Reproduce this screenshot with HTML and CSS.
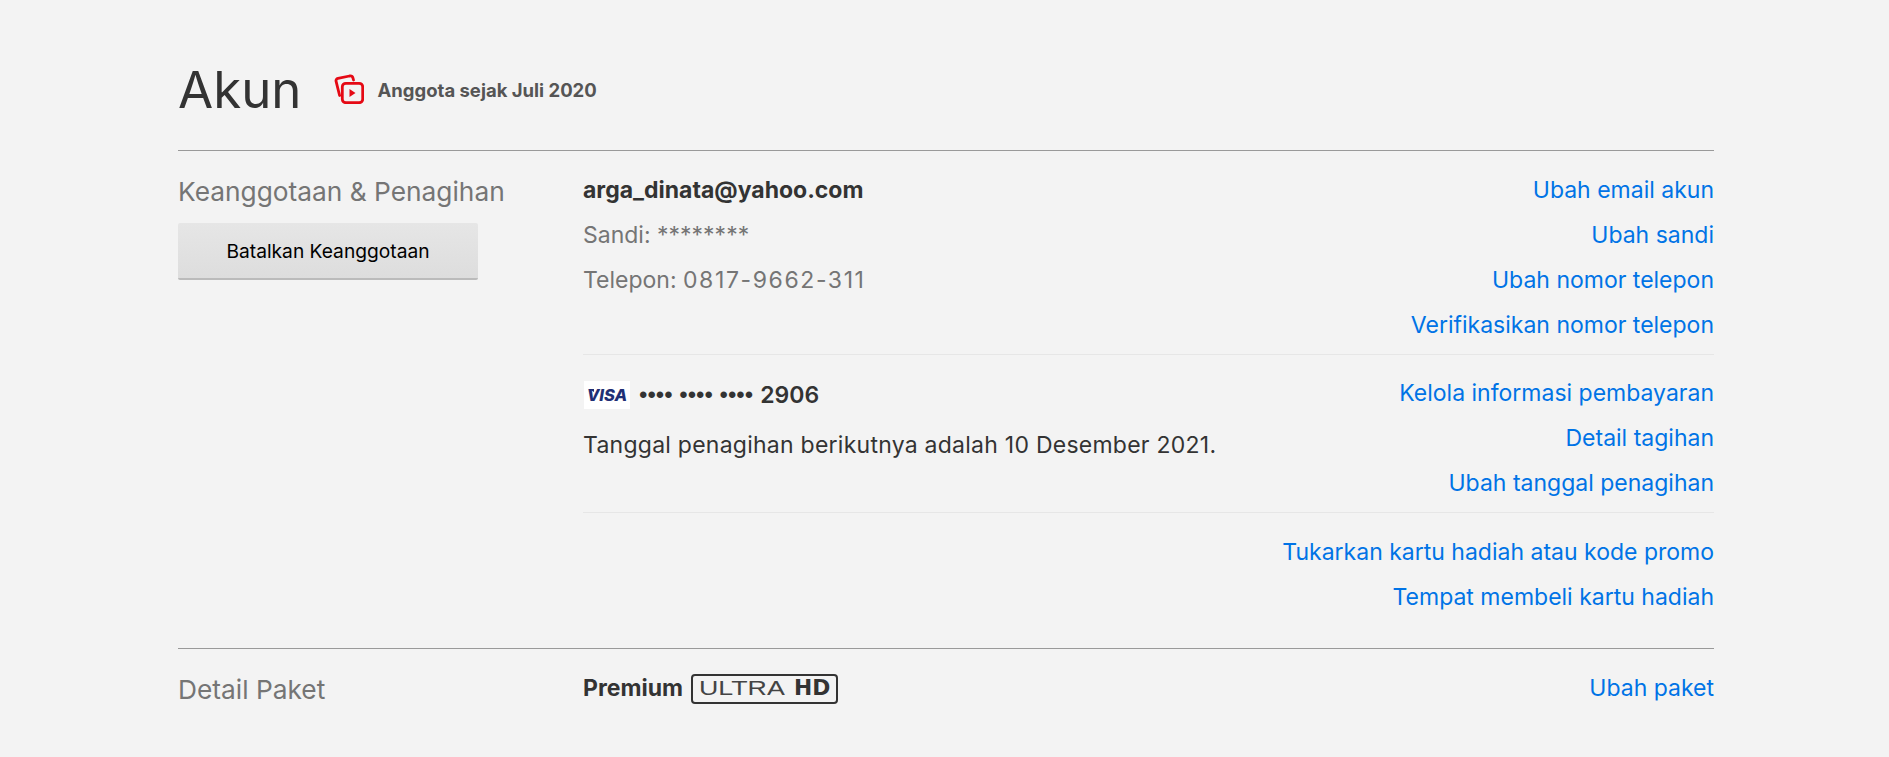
FILE: index.html
```html
<!DOCTYPE html>
<html lang="id">
<head>
<meta charset="utf-8">
<title>Akun</title>
<link rel="stylesheet" href="styles.css">
</head>
<body>
<main class="account">
  <header class="head">
    <h1 class="title">Akun</h1>
    <div class="since">
      <svg class="since-icon" viewBox="0 0 30 30" width="30" height="30">
        <path d="M5.600 21.500 2.100 7.400 C1.700 5.800 2.500 4.700 4 4.400 L15.500 2 C17.200 1.700 18.500 2.300 19 4.200 L19.500 6" fill="none" stroke="#e50914" stroke-width="2.800" stroke-linecap="round"/>
        <rect x="8.300" y="9.300" width="20.400" height="19.400" rx="3.500" fill="none" stroke="#e50914" stroke-width="2.800"/>
        <path d="M15.500 15 21.500 19 15.500 23Z" fill="#e50914"/>
      </svg>
      <span class="since-text">Anggota sejak Juli 2020</span>
    </div>
  </header>
  <section class="section">
    <div class="side">
      <h2 class="side-title">Keanggotaan &amp; Penagihan</h2>
      <button class="cancel">Batalkan Keanggotaan</button>
    </div>
    <div class="body">
      <div class="group">
        <div class="info">
          <div class="line strong">arga_dinata@yahoo.com</div>
          <div class="line muted">Sandi: ********</div>
          <div class="line muted">Telepon: <span class="phone">0817-9662-311</span></div>
        </div>
        <div class="links">
          <a class="link">Ubah email akun</a>
          <a class="link">Ubah sandi</a>
          <a class="link">Ubah nomor telepon</a>
          <a class="link">Verifikasikan nomor telepon</a>
        </div>
      </div>
      <div class="group">
        <div class="info">
          <div class="card-line">
            <span class="visa">VISA</span>
            <span class="dots">•••• •••• ••••</span>
            <span class="digits">2906</span>
          </div>
          <div class="line billing">Tanggal penagihan berikutnya adalah 10 Desember 2021.</div>
        </div>
        <div class="links">
          <a class="link">Kelola informasi pembayaran</a>
          <a class="link">Detail tagihan</a>
          <a class="link">Ubah tanggal penagihan</a>
        </div>
      </div>
      <div class="group last">
        <div class="info"></div>
        <div class="links">
          <a class="link">Tukarkan kartu hadiah atau kode promo</a>
          <a class="link">Tempat membeli kartu hadiah</a>
        </div>
      </div>
    </div>
  </section>
  <section class="section plan">
    <div class="side"><h2 class="side-title">Detail Paket</h2></div>
    <div class="body">
      <div class="group last">
        <div class="info">
          <div class="line plan-line"><span class="strong">Premium</span><span class="uhd"><span class="uhd-thin">ULTRA</span><span class="uhd-bold">HD</span></span></div>
        </div>
        <div class="links"><a class="link">Ubah paket</a></div>
      </div>
    </div>
  </section>
</main>
</body>
</html>
```

FILE: styles.css
```css
* { box-sizing: border-box; }
html, body { margin: 0; height: 100%; }
body { background: #f3f3f3; color: #333; font-family: "Inter", "Liberation Sans", sans-serif; font-size: 23px; overflow: hidden; }
.account { padding: 63px 175px 0 178px; }
.head { display: flex; align-items: center; height: 54px; margin-bottom: 33px; }
.title { margin: 0; font-size: 51px; font-weight: 400; line-height: 54px; color: #333; }
.since { display: flex; align-items: center; gap: 13px; margin-left: 33px; font-size: 18.500px; font-weight: 700; color: #555; }
.since-icon { flex: none; margin-top: -2px; }
.section { display: flex; border-top: 1px solid #999; padding-top: 16px; }
.side { width: 405px; flex: none; }
.side-title { margin: 2px 0 9px; font-size: 26.300px; font-weight: 400; line-height: 45px; color: #757575; }
.cancel { display: block; width: 300px; height: 57px; border: 0; border-bottom: 2px solid #bbb; border-radius: 2px; background: linear-gradient(#e6e6e6, #dddddd); font: 400 19.200px "Inter", "Liberation Sans", sans-serif; color: #000; padding: 0; }
.body { flex: 1; }
.group { display: flex; justify-content: space-between; border-bottom: 1px solid #e6e6e6; padding: 1px 0 6px; margin-bottom: 15px; }
.group + .group { margin-bottom: 16px; }
.group.last { border-bottom: 0; margin-bottom: 0; padding-bottom: 0; }
.links { display: flex; flex-direction: column; align-items: flex-end; }
.link { font-size: 23px; line-height: 45px; color: #0073e6; }
.line { font-size: 23px; line-height: 45px; color: #333; }
.strong { font-weight: 700; color: #333; }
.muted { color: #757575; }
.phone { letter-spacing: 1.600px; }
.billing { letter-spacing: .25px; margin-top: 5px; }
.card-line { display: flex; align-items: center; gap: 8px; height: 47px; }
.visa { position: relative; width: 46px; height: 28px; margin-left: 1px; margin-right: 1px; background: #fff; color: #1f2f75; font-size: 16.500px; font-weight: 800; font-style: italic; text-align: center; line-height: 28px; }
.visa::before { content: ""; position: absolute; left: 5px; top: 8px; border-top: 3px solid #1f2f75; border-left: 5px solid transparent; }
.dots { font-family: "Liberation Sans", sans-serif; font-size: 24px; color: #333; }
.digits { font-weight: 600; color: #333; margin-left: -1px; }
.plan { margin-top: 28px; }
.plan-line { display: flex; align-items: center; gap: 8px; }
.uhd { display: flex; align-items: center; width: 147px; height: 30px; padding-left: 6px; border: 2px solid #333; border-radius: 4px; line-height: 1; white-space: nowrap; }
.uhd-thin { width: 95px; font-family: "Liberation Sans", sans-serif; font-size: 20.600px; font-weight: 400; color: #444; transform: scaleX(1.3); transform-origin: left; }
.uhd-bold { font-family: "DejaVu Sans", sans-serif; font-size: 20.600px; font-weight: 700; color: #333; transform: scaleX(1.06); transform-origin: left; }
```
